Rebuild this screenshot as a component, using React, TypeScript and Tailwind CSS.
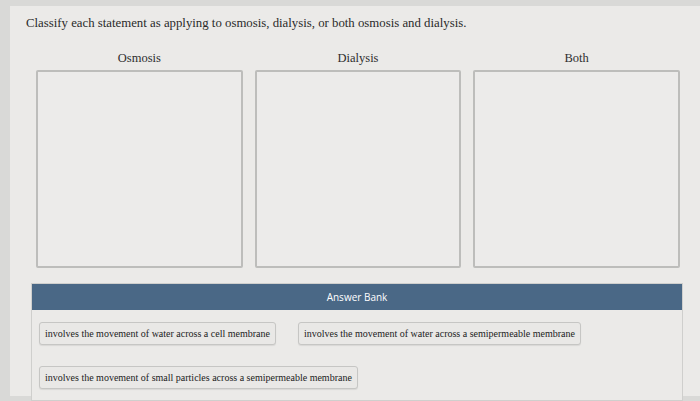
import React from 'react';

const columns = ['Osmosis', 'Dialysis', 'Both'];

const answers = [
  'involves the movement of water across a cell membrane',
  'involves the movement of water across a semipermeable membrane',
  'involves the movement of small particles across a semipermeable membrane',
];

export default function App() {
  return (
    <div className="w-[700px] h-[401px] overflow-hidden bg-[#d9d9d7] pl-[10px] pt-[6px]">
      <div className="h-[390px] bg-[#ebeae8] pl-[16px] pr-[8px] pt-[9px] font-['Liberation_Serif',serif]">
        <p className="text-[12.8px] leading-[16px] text-[#2a2a2a]">
          Classify each statement as applying to osmosis, dialysis, or both osmosis and dialysis.
        </p>

        <div className="mt-[20px] ml-[10px] grid grid-cols-3 gap-[12px] w-[644px]">
          {columns.map((name) => (
            <div key={name} className="flex flex-col">
              <div className="text-center text-[12.5px] leading-[15px] text-[#2e2e2e]">{name}</div>
              <div className="mt-[4px] h-[198px] rounded-[2px] border-2 border-[#bdbdbb] bg-[#ecebea]" />
            </div>
          ))}
        </div>

        <div className="mt-[15px] ml-[5px] w-[652px] border border-[#cfcfcd]">
          <div className="h-[26px] bg-[#4a6886] flex items-center justify-center text-white text-[10px] font-['Open_Sans',sans-serif]">
            Answer Bank
          </div>
          <div className="h-[90px] bg-[#ebeae8] px-[7px] pt-[12px] flex flex-wrap gap-x-[22px] gap-y-[21px] content-start">
            {answers.map((text) => (
              <div
                key={text}
                className="h-[23px] px-[5px] flex items-center rounded-[3px] border border-[#c6c6c4] bg-[#e9e8e6] shadow-[0_1px_1px_rgba(0,0,0,0.08)] text-[10px] text-[#222] whitespace-nowrap"
              >
                {text}
              </div>
            ))}
          </div>
        </div>
      </div>
    </div>
  );
}
